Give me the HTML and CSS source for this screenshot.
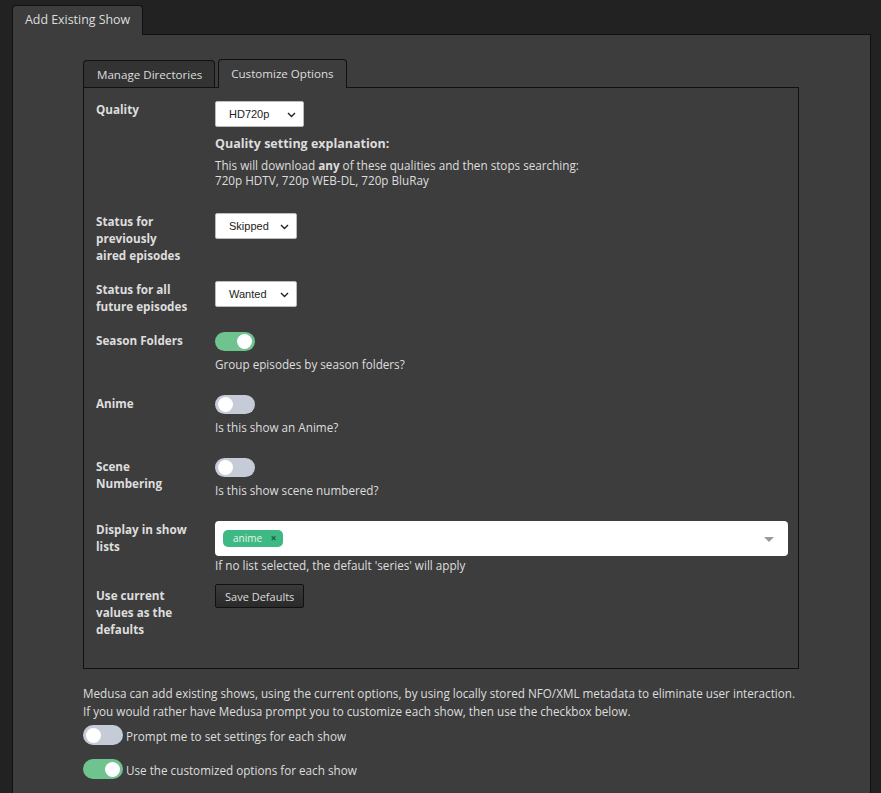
FILE: index.html
```html
<!DOCTYPE html>
<html>
<head>
<meta charset="utf-8">
<title>Add Existing Show</title>
<link rel="stylesheet" href="styles.css">
</head>
<body>
<div class="wrap">
  <div class="outer-tabs">
    <div class="outer-tab">Add Existing Show</div>
  </div>
  <div class="outer-panel">
    <div class="tabs">
      <div class="tab">Manage Directories</div>
      <div class="tab active">Customize Options</div>
    </div>
    <div class="panel">
      <div class="row quality-row">
        <div class="label">Quality</div>
        <div class="control">
          <div class="select sel-quality"><span>HD720p</span>
            <svg class="chev" width="9" height="6" viewBox="0 0 9 6"><path d="M1 1l3.5 3.5L8 1" fill="none" stroke="#222" stroke-width="1.4"/></svg>
          </div>
          <div class="q-head">Quality setting explanation:</div>
          <div class="q-text">This will download <b>any</b> of these qualities and then stops searching:<br>720p HDTV, 720p WEB-DL, 720p BluRay</div>
        </div>
      </div>
      <div class="row">
        <div class="label">Status for previously aired episodes</div>
        <div class="control">
          <div class="select sel-status"><span>Skipped</span>
            <svg class="chev" width="9" height="6" viewBox="0 0 9 6"><path d="M1 1l3.5 3.5L8 1" fill="none" stroke="#222" stroke-width="1.4"/></svg>
          </div>
        </div>
      </div>
      <div class="row">
        <div class="label">Status for all future episodes</div>
        <div class="control">
          <div class="select sel-status"><span>Wanted</span>
            <svg class="chev" width="9" height="6" viewBox="0 0 9 6"><path d="M1 1l3.5 3.5L8 1" fill="none" stroke="#222" stroke-width="1.4"/></svg>
          </div>
        </div>
      </div>
      <div class="row toggle-row">
        <div class="label">Season Folders</div>
        <div class="control">
          <div class="toggle on"><span class="knob"></span></div>
          <div class="help">Group episodes by season folders?</div>
        </div>
      </div>
      <div class="row toggle-row">
        <div class="label">Anime</div>
        <div class="control">
          <div class="toggle"><span class="knob"></span></div>
          <div class="help">Is this show an Anime?</div>
        </div>
      </div>
      <div class="row toggle-row">
        <div class="label">Scene Numbering</div>
        <div class="control">
          <div class="toggle"><span class="knob"></span></div>
          <div class="help">Is this show scene numbered?</div>
        </div>
      </div>
      <div class="row lists-row">
        <div class="label">Display in show lists</div>
        <div class="control">
          <div class="multi">
            <span class="tag">anime <span class="x">×</span></span>
            <svg class="caret" width="10" height="5" viewBox="0 0 10 5"><path d="M0 0h10L5 5z" fill="#999"/></svg>
          </div>
          <div class="help tight">If no list selected, the default 'series' will apply</div>
        </div>
      </div>
      <div class="row last-row">
        <div class="label">Use current values as the defaults</div>
        <div class="control">
          <button class="btn">Save Defaults</button>
        </div>
      </div>
    </div>
    <p class="intro">Medusa can add existing shows, using the current options, by using locally stored NFO/XML metadata to eliminate user interaction.<br>If you would rather have Medusa prompt you to customize each show, then use the checkbox below.</p>
    <div class="opt">
      <div class="toggle big"><span class="knob"></span></div>
      <span class="opt-label">Prompt me to set settings for each show</span>
    </div>
    <div class="opt">
      <div class="toggle big on"><span class="knob"></span></div>
      <span class="opt-label">Use the customized options for each show</span>
    </div>
  </div>
</div>
</body>
</html>
```
FILE: styles.css
```css
html, body {
  margin: 0;
  padding: 0;
  background: #222;
}
body {
  font-family: "Open Sans", "DejaVu Sans", sans-serif;
  font-size: 11.7px;
  color: #ddd;
}
.wrap {
  padding: 5px 10px 0 12px;
}
.outer-tabs {
  display: flex;
}
.outer-tab {
  position: relative;
  z-index: 1;
  box-sizing: border-box;
  height: 30px;
  line-height: 28px;
  padding: 0 12px;
  font-size: 12.4px;
  background: #3d3d3d;
  border: 1px solid #111;
  border-bottom: none;
  border-radius: 4px 4px 0 0;
  margin-bottom: -1px;
}
.outer-panel {
  background: #3d3d3d;
  border: 1px solid #111;
  padding: 24px 71px 30px 70px;
}
.tabs {
  display: flex;
  align-items: flex-end;
  gap: 3px;
}
.tab {
  box-sizing: border-box;
  height: 27px;
  line-height: 27px;
  padding: 0 12px 0 13px;
  font-size: 11.6px;
  background: #333;
  border: 1px solid #111;
  border-bottom: none;
  border-radius: 4px 4px 0 0;
}
.tab.active {
  position: relative;
  z-index: 1;
  height: 29px;
  line-height: 28px;
  padding: 0 12px;
  background: #3d3d3d;
  margin-bottom: -1px;
}
.panel {
  border: 1px solid #111;
  padding: 13px 10px 30px 12px;
}
.row {
  display: grid;
  grid-template-columns: 119px 1fr;
  margin-bottom: 17px;
}
.label {
  font-weight: bold;
  line-height: 17px;
  width: 92.5px;
}
.control {
  min-width: 0;
}
.select {
  position: relative;
  height: 26px;
  box-sizing: border-box;
  background: #fff;
  border: 1px solid #bbb;
  border-radius: 2px;
  font-family: "Liberation Sans", Arial, sans-serif;
  font-size: 11px;
  color: #222;
  line-height: 24px;
  padding-left: 13px;
}
.sel-quality { width: 89px; }
.sel-status { width: 82px; }
.chev {
  position: absolute;
  right: 7px;
  top: 10px;
}
.quality-row { margin-bottom: 25px; }
.q-head {
  margin-top: 8px;
  font-weight: bold;
  font-size: 12.5px;
  line-height: 18px;
}
.q-text {
  margin-top: 5px;
  line-height: 15px;
}
.toggle-row { margin-bottom: 22px; }
.toggle {
  position: relative;
  width: 40px;
  height: 19px;
  border-radius: 10px;
  background: #c5ccd8;
}
.toggle .knob {
  position: absolute;
  left: 3px;
  top: 2px;
  width: 15px;
  height: 15px;
  border-radius: 50%;
  background: #fff;
}
.toggle.on { background: #6ec38f; }
.toggle.on .knob { left: 22px; }
.help {
  margin-top: 5px;
  line-height: 17px;
}
.help.tight { margin-top: 1px; }
.lists-row { margin-bottom: 10px; }
.multi {
  position: relative;
  height: 35px;
  box-sizing: border-box;
  background: #fff;
  border-radius: 4px;
  padding: 8px 8px;
}
.tag {
  display: inline-block;
  height: 17px;
  line-height: 17px;
  padding: 0 7px 0 10px;
  border-radius: 5px;
  background: #3fb984;
  color: #e6f5ed;
  font-size: 10px;
}
.tag .x {
  margin-left: 6px;
  color: #22573f;
  font-size: 10px;
  font-weight: bold;
}
.caret {
  position: absolute;
  right: 14px;
  top: 16px;
}
.last-row { margin-bottom: 0; }
.last-row .label { padding-top: 3px; }
.btn {
  font-family: "Open Sans", "DejaVu Sans", sans-serif;
  font-size: 11px;
  color: #ddd;
  height: 24px;
  padding: 0 9px;
  background: linear-gradient(#3a3a3a, #2a2a2a);
  border: 1px solid #111;
  border-radius: 2px;
}
.intro {
  margin: 15px 0 0;
  line-height: 18px;
}
.opt {
  display: flex;
  align-items: center;
  gap: 3px;
  margin-top: 5px;
}
.opt + .opt { margin-top: 14px; }
.toggle.big { height: 20px; }
.toggle.big .knob { top: 2.5px; }
.opt-label { position: relative; top: 1px; }
```
